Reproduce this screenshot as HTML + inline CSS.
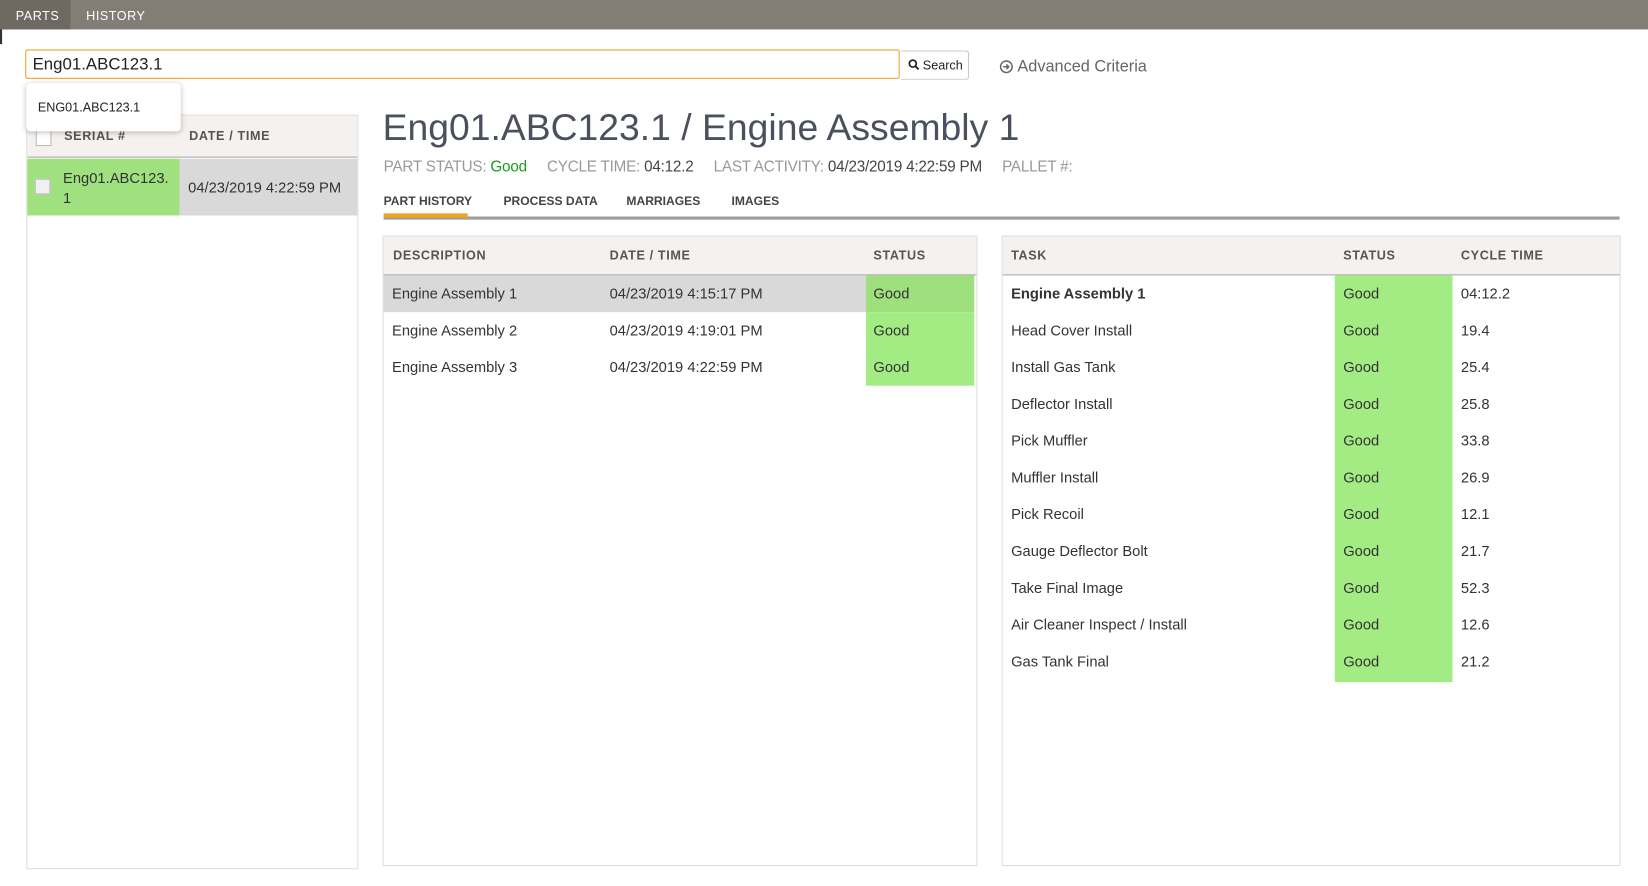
<!DOCTYPE html>
<html><head><meta charset="utf-8"><style>
html,body{margin:0;padding:0;background:#fff;overflow:hidden;width:1648px;height:886px}
#w{position:absolute;left:0;top:0;width:1568px;height:843px;transform:scale(1.05102);transform-origin:0 0;font-family:"Liberation Sans",sans-serif;color:#333}
.a{position:absolute}
.hd{font-size:12px;font-weight:bold;color:#555;letter-spacing:.6px}
.c{font-size:14px;color:#333}
.g{background:#a3ec84}
</style></head><body><div id="w">
<div class="a" style="left:0;top:0;width:1568px;height:28px;background:#847d75"></div>
<div class="a" style="left:0;top:0;width:67px;height:28px;background:#6f6962"></div>
<div class="a" style="left:15px;top:8px;font-size:12px;color:#fff;letter-spacing:.5px">PARTS</div>
<div class="a" style="left:82px;top:8px;font-size:12px;color:#fff;letter-spacing:.5px">HISTORY</div>
<div class="a" style="left:0;top:28px;width:2px;height:14px;background:#333"></div>

<div class="a" style="left:24px;top:47px;width:830px;height:26px;border:1.5px solid #efa22a;border-radius:2px"></div>
<div class="a" style="left:31px;top:53px;font-size:16px;color:#222">Eng01.ABC123.1</div>
<div class="a" style="left:857px;top:48px;width:64px;height:26px;border:1px solid #c8c8c8;border-left:none;border-radius:0 3px 3px 0"></div>
<svg class="a" style="left:864px;top:56px" width="11" height="11" viewBox="0 0 11 11"><circle cx="4.5" cy="4.5" r="3.3" fill="none" stroke="#222" stroke-width="1.6"/><path d="M7 7L10 10" stroke="#222" stroke-width="1.8"/></svg>
<div class="a" style="left:878px;top:55px;font-size:12px;color:#222">Search</div>
<svg class="a" style="left:951px;top:57px" width="13" height="13" viewBox="0 0 13 13"><circle cx="6.5" cy="6.5" r="5.5" fill="none" stroke="#666" stroke-width="1.4"/><path d="M3.5 6.5H8.5M6.5 4.3L8.8 6.5L6.5 8.7" fill="none" stroke="#666" stroke-width="1.4"/></svg>
<div class="a" style="left:968px;top:55px;font-size:15.5px;color:#666">Advanced Criteria</div>

<div class="a" style="left:25px;top:109px;width:314px;height:716px;border:1px solid #ddd"></div>
<div class="a" style="left:26px;top:110px;width:314px;height:39px;background:#f4f1ee;border-bottom:1.5px solid #aaa"></div>
<div class="a hd" style="left:61px;top:122px">SERIAL #</div>
<div class="a hd" style="left:180px;top:122px">DATE / TIME</div>
<div class="a" style="left:34px;top:124px;width:13px;height:13px;border:1px solid #bbb;background:#fff"></div>
<div class="a" style="left:26px;top:151px;width:145px;height:54px;background:#a0e17f"></div>
<div class="a" style="left:171px;top:151px;width:169px;height:54px;background:#d9d9d9"></div>
<div class="a" style="left:33px;top:170px;width:13px;height:13px;border:1px solid #bbb;background:#f0f0f0"></div>
<div class="a c" style="left:60px;top:160px;line-height:19px">Eng01.ABC123.<br>1</div>
<div class="a c" style="left:179px;top:170px">04/23/2019 4:22:59 PM</div>

<div class="a" style="left:25px;top:79px;width:147px;height:46px;background:#fff;border-radius:4px;box-shadow:0 1px 5px rgba(0,0,0,.25)"></div>
<div class="a" style="left:36px;top:95px;font-size:12px;color:#222">ENG01.ABC123.1</div>

<div class="a" style="left:364px;top:101px;font-size:35.5px;color:#4a505e">Eng01.ABC123.1 / Engine Assembly 1</div>
<div class="a" style="left:365px;top:151px;font-size:14.5px;color:#999;white-space:pre;letter-spacing:-.2px">PART STATUS: <span style="color:#1b9a1b">Good</span>     CYCLE TIME: <span style="color:#444">04:12.2</span>     LAST ACTIVITY: <span style="color:#444">04/23/2019 4:22:59 PM</span>     PALLET #:</div>
<div class="a hd" style="left:365px;top:186px;color:#444;letter-spacing:0;font-size:11.5px">PART HISTORY</div>
<div class="a hd" style="left:479px;top:186px;color:#444;letter-spacing:0;font-size:11.5px">PROCESS DATA</div>
<div class="a hd" style="left:596px;top:186px;color:#444;letter-spacing:0;font-size:11.5px">MARRIAGES</div>
<div class="a hd" style="left:696px;top:186px;color:#444;letter-spacing:0;font-size:11.5px">IMAGES</div>
<div class="a" style="left:365px;top:206px;width:1176px;height:3px;background:#9d9d9d"></div>
<div class="a" style="left:365px;top:203px;width:80px;height:4px;background:#f5a31a"></div>

<div class="a" style="left:364px;top:224px;width:564px;height:598px;border:1px solid #ddd"></div>
<div class="a" style="left:365px;top:225px;width:564px;height:36px;background:#f4f1ee;border-bottom:1.5px solid #aaa"></div>
<div class="a hd" style="left:374px;top:236px">DESCRIPTION</div>
<div class="a hd" style="left:580px;top:236px">DATE / TIME</div>
<div class="a hd" style="left:831px;top:236px">STATUS</div>
<div class="a" style="left:365px;top:262px;width:459px;height:35px;background:#d9d9d9"></div>
<div class="a" style="left:824px;top:262px;width:103px;height:35px;background:#9ee07e"></div>
<div class="a g" style="left:824px;top:297px;width:103px;height:70px"></div>
<div class="a c" style="left:373px;top:271px">Engine Assembly 1</div><div class="a c" style="left:580px;top:271px">04/23/2019 4:15:17 PM</div><div class="a c" style="left:831px;top:271px">Good</div>
<div class="a c" style="left:373px;top:306px">Engine Assembly 2</div><div class="a c" style="left:580px;top:306px">04/23/2019 4:19:01 PM</div><div class="a c" style="left:831px;top:306px">Good</div>
<div class="a c" style="left:373px;top:341px">Engine Assembly 3</div><div class="a c" style="left:580px;top:341px">04/23/2019 4:22:59 PM</div><div class="a c" style="left:831px;top:341px">Good</div>

<div class="a" style="left:953px;top:224px;width:587px;height:598px;border:1px solid #ddd"></div>
<div class="a" style="left:954px;top:225px;width:587px;height:36px;background:#f4f1ee;border-bottom:1.5px solid #aaa"></div>
<div class="a hd" style="left:962px;top:236px">TASK</div>
<div class="a hd" style="left:1278px;top:236px">STATUS</div>
<div class="a hd" style="left:1390px;top:236px">CYCLE TIME</div>
<div class="a g" style="left:1270px;top:262px;width:112px;height:387px"></div>
<div class="a c" style="left:962px;top:262px;line-height:35px">
<b>Engine Assembly 1</b><br>Head Cover Install<br>Install Gas Tank<br>Deflector Install<br>Pick Muffler<br>Muffler Install<br>Pick Recoil<br>Gauge Deflector Bolt<br>Take Final Image<br>Air Cleaner Inspect / Install<br>Gas Tank Final</div>
<div class="a c" style="top:262px;line-height:35px;left:1278px">Good<br>Good<br>Good<br>Good<br>Good<br>Good<br>Good<br>Good<br>Good<br>Good<br>Good</div>
<div class="a c" style="left:1390px;top:262px;line-height:35px">04:12.2<br>19.4<br>25.4<br>25.8<br>33.8<br>26.9<br>12.1<br>21.7<br>52.3<br>12.6<br>21.2</div>
</div></body></html>
